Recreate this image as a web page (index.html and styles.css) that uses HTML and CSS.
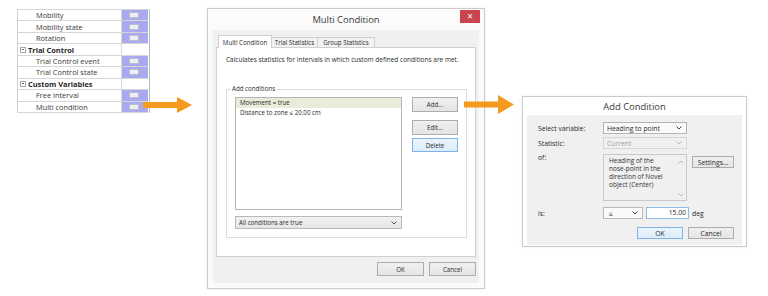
FILE: index.html
```html
<!DOCTYPE html>
<html lang="en">
<head>
  <meta charset="UTF-8">
  <title>Multi Condition</title>
  <meta name="viewport" content="width=device-width, initial-scale=1.0">
  <link rel="stylesheet" href="styles.css">
</head>
<body>
<div id="canvas">

  <!-- variable tree -->
  <div class="tree">
    <div class="row"><div class="name">Mobility</div><div class="cell"><span class="mini"></span></div></div>
    <div class="row"><div class="name">Mobility state</div><div class="cell"><span class="mini"></span></div></div>
    <div class="row"><div class="name">Rotation</div><div class="cell"><span class="mini"></span></div></div>
    <div class="row head"><div class="name"><span class="fold"></span>Trial Control</div><div class="cell"></div></div>
    <div class="row"><div class="name">Trial Control event</div><div class="cell"><span class="mini"></span></div></div>
    <div class="row"><div class="name">Trial Control state</div><div class="cell"><span class="mini"></span></div></div>
    <div class="row head"><div class="name"><span class="fold"></span>Custom Variables</div><div class="cell"></div></div>
    <div class="row"><div class="name">Free interval</div><div class="cell"><span class="mini"></span></div></div>
    <div class="row"><div class="name">Multi condition</div><div class="cell"><span class="mini"></span></div></div>
  </div>

  <svg class="arrow arrow-1" width="50" height="16" viewBox="0 0 50 16">
    <polygon points="0,5 34,5 34,0 49,8 34,16 34,11 0,11" fill="#f39a1f"/>
  </svg>

  <!-- Multi Condition dialog -->
  <div class="win mc">
    <div class="titlebar">
      <span class="title">Multi Condition</span>
      <span class="close">&#215;</span>
    </div>
    <div class="client">
      <div class="tabs">
        <div class="tab active">Multi Condition</div>
        <div class="tab t2">Trial Statistics</div>
        <div class="tab t3">Group Statistics</div>
      </div>
      <div class="tabpanel">
        <div class="desc">Calculates statistics for intervals in which custom defined conditions are met.</div>
        <div class="group">
          <span class="group-label">Add conditions</span>
          <div class="group-body">
            <div class="list-col">
              <div class="listbox">
                <div class="item selected">Movement = true</div>
                <div class="item">Distance to zone &#8804; 20.00 cm</div>
              </div>
              <div class="combo wide">
                <span>All conditions are true</span>
                <svg width="6" height="4" viewBox="0 0 6 4"><polyline points="0.5,0.5 3,3 5.5,0.5" fill="none" stroke="#555" stroke-width="1"/></svg>
              </div>
            </div>
            <div class="btn-col">
              <div class="btn add">Add...</div>
              <div class="btn edit">Edit...</div>
              <div class="btn focus delete">Delete</div>
            </div>
          </div>
        </div>
      </div>
      <div class="footer">
        <div class="btn foot">OK</div>
        <div class="btn foot">Cancel</div>
      </div>
    </div>
  </div>

  <svg class="arrow arrow-2" width="51" height="19" viewBox="0 0 51 19">
    <polygon points="0,6.5 34,6.5 34,0 50,9.5 34,19 34,12.5 0,12.5" fill="#f39a1f"/>
  </svg>

  <!-- Add Condition dialog -->
  <div class="win ac">
    <div class="titlebar small">
      <span class="title">Add Condition</span>
    </div>
    <div class="client ac-client">
      <div class="ac-row">
        <div class="lbl">Select variable:</div>
        <div class="combo sel">
          <span>Heading to point</span>
          <svg width="6" height="4" viewBox="0 0 6 4"><polyline points="0.5,0.5 3,3 5.5,0.5" fill="none" stroke="#444" stroke-width="1"/></svg>
        </div>
      </div>
      <div class="ac-row r2">
        <div class="lbl">Statistic:</div>
        <div class="combo sel disabled">
          <span>Current</span>
          <svg width="6" height="4" viewBox="0 0 6 4"><polyline points="0.5,0.5 3,3 5.5,0.5" fill="none" stroke="#bbb" stroke-width="1"/></svg>
        </div>
      </div>
      <div class="ac-row r3">
        <div class="lbl top">of:</div>
        <div class="memo">
          <div class="memo-text">Heading of the<br>nose-point in the<br>direction of Novel<br>object (Center)</div>
          <div class="memo-bar">
            <svg width="6" height="4" viewBox="0 0 6 4"><polyline points="0.5,3.5 3,1 5.5,3.5" fill="none" stroke="#bbb" stroke-width="1"/></svg>
            <svg width="6" height="4" viewBox="0 0 6 4"><polyline points="0.5,0.5 3,3 5.5,0.5" fill="none" stroke="#bbb" stroke-width="1"/></svg>
          </div>
        </div>
        <div class="btn settings">Settings...</div>
      </div>
      <div class="ac-row r4">
        <div class="lbl">is:</div>
        <div class="combo op">
          <span>&#8804;</span>
          <svg width="6" height="4" viewBox="0 0 6 4"><polyline points="0.5,0.5 3,3 5.5,0.5" fill="none" stroke="#444" stroke-width="1"/></svg>
        </div>
        <div class="num">15.00</div>
        <div class="unit">deg</div>
      </div>
      <div class="ac-row r5">
        <div class="btn focus ac-btn">OK</div>
        <div class="btn ac-btn">Cancel</div>
      </div>
    </div>
  </div>

</div>
</body>
</html>
```

FILE: styles.css
```css
* {
  box-sizing: border-box;
}
body, html {
  margin: 0;
  padding: 0;
  background: #ffffff;
  font-family: 'Open Sans', 'Noto Sans', sans-serif;
  color: #2a2a2a;
}
#canvas {
  position: relative;
  width: 768px;
  height: 296px;
  overflow: hidden;
}

/* tree */
.tree {
  position: absolute;
  left: 17px;
  top: 9px;
  width: 133px;
  border-left: 1px solid #cfcfcf;
  border-top: 1px solid #d6d6d6;
  border-right: 1px solid #b9b9b9;
  padding-right: 1px;
  font-size: 7.4px;
}
.row {
  display: flex;
  height: 11.45px;
  border-bottom: 1px solid #d6d6d6;
}
.name {
  width: 104px;
  padding-left: 18px;
  display: flex;
  align-items: center;
  border-right: 1px solid #d6d6d6;
  white-space: nowrap;
  color: #3a3a3a;
}
.cell {
  flex: 1;
  background: #a9a9f0;
  display: flex;
  align-items: center;
  padding-left: 7px;
}
.head .name {
  padding-left: 2px;
  font-weight: 700;
  color: #262626;
}
.head .cell {
  background: #ffffff;
}
.fold {
  width: 6px;
  height: 6px;
  border: 1px solid #a5a5a5;
  margin-right: 2px;
  position: relative;
}
.fold::after {
  content: "";
  position: absolute;
  left: 1px;
  right: 1px;
  top: 1.5px;
  height: 1px;
  background: #666;
}
.mini {
  width: 10px;
  height: 6px;
  border: 1px solid #bcbccc;
  border-radius: 1px;
  background: #eeeef4;
}

/* arrows */
.arrow {
  position: absolute;
}
.arrow-1 {
  left: 143px;
  top: 97px;
}
.arrow-2 {
  left: 464px;
  top: 95px;
}

/* windows */
.win {
  position: absolute;
  background: #fbfbfb;
  border: 1px solid #cbcbcb;
  display: flex;
  flex-direction: column;
  box-shadow: 0 0 3px rgba(0, 0, 0, 0.08);
}
.mc {
  left: 207px;
  top: 8px;
  width: 278px;
  height: 281px;
}
.ac {
  left: 522px;
  top: 96px;
  width: 225px;
  height: 151px;
  background: #ffffff;
}
.titlebar {
  height: 21px;
  display: flex;
  align-items: center;
  justify-content: center;
  position: relative;
}
.titlebar.small {
  height: 18px;
}
.title {
  font-size: 9.4px;
  color: #3a3a3a;
}
.close {
  position: absolute;
  right: 4px;
  top: 1px;
  width: 20px;
  height: 13px;
  background: #c9444b;
  color: #fff;
  font-size: 10px;
  line-height: 13px;
  text-align: center;
}
.client {
  flex: 1;
  margin: 0 5px 5px;
  background: #f0f0f0;
  padding: 5px 3px 0;
  display: flex;
  flex-direction: column;
  font-size: 6.2px;
}

/* tabs */
.tabs {
  display: flex;
  align-items: flex-end;
  height: 13px;
  margin: 0 0 -1px 2px;
}
.tab {
  height: 11px;
  border: 1px solid #d0d0d0;
  border-left: 0;
  background: #f2f2f2;
  display: flex;
  align-items: center;
  justify-content: center;
  white-space: nowrap;
}
.tab.active {
  width: 54px;
  height: 13px;
  border-left: 1px solid #d0d0d0;
  border-bottom: 0;
  background: #ffffff;
  position: relative;
  z-index: 1;
}
.t2 {
  width: 46px;
}
.t3 {
  width: 57px;
}
.tabpanel {
  height: 210px;
  background: #ffffff;
  border: 1px solid #d0d0d0;
  padding: 8px 0 0 9px;
}
.desc {
  line-height: 8px;
  font-size: 6.5px;
  white-space: nowrap;
}
.group {
  position: relative;
  width: 241px;
  margin-top: 25px;
  border: 1px solid #dcdcdc;
  padding: 7px 8px 8px;
}
.group-label {
  position: absolute;
  left: 4px;
  top: -5px;
  line-height: 8px;
  padding: 0 1px;
  background: #ffffff;
}
.group-body {
  display: flex;
}
.list-col {
  width: 167px;
}
.listbox {
  height: 113px;
  border: 1px solid #b5b5b5;
  background: #fff;
}
.item {
  height: 10px;
  line-height: 10px;
  padding-left: 4px;
  white-space: nowrap;
}
.item.selected {
  background: #e9ecdb;
}
.combo {
  display: flex;
  align-items: center;
  justify-content: space-between;
  border: 1px solid #b9b9b9;
  background: linear-gradient(#f2f2f2, #e6e6e6);
  padding: 0 4px 0 3px;
  white-space: nowrap;
}
.combo.wide {
  height: 13px;
  margin-top: 6px;
}
.btn-col {
  margin-left: 10px;
  width: 46px;
  display: flex;
  flex-direction: column;
}
.btn {
  display: flex;
  align-items: center;
  justify-content: center;
  border: 1px solid #adadad;
  background: linear-gradient(#f0f0f0, #e4e4e4);
  white-space: nowrap;
}
.btn.focus {
  border-color: #7eb4ea;
  background: linear-gradient(#ecf4fc, #dcecfc);
}
.add {
  height: 15px;
}
.edit {
  height: 15px;
  margin-top: 8px;
}
.delete {
  height: 14px;
  margin-top: 3px;
}
.footer {
  display: flex;
  justify-content: flex-end;
  gap: 5px;
  margin-top: 5px;
}
.foot {
  width: 47px;
  height: 14px;
}

/* add condition */
.ac-client {
  margin: 0 4px 1px;
  padding: 7px 8px 0 11px;
  font-size: 6.8px;
}
.ac-row {
  display: flex;
  align-items: center;
}
.r2 {
  margin-top: 3px;
}
.r3 {
  margin-top: 5px;
  align-items: flex-start;
}
.r4 {
  margin-top: 6px;
}
.r5 {
  margin-top: 8px;
  justify-content: flex-end;
  gap: 5px;
}
.lbl {
  width: 65px;
  white-space: nowrap;
}
.lbl.top {
  line-height: 8px;
}
.combo.sel {
  width: 84px;
  height: 12px;
  background: #fafafa;
  border-color: #b3b3b3;
}
.combo.disabled {
  color: #a0a0a0;
  background: #f0f0f0;
  border-color: #d6d6d6;
}
.memo {
  width: 84px;
  height: 47px;
  border: 1px solid #c8c8c8;
  display: flex;
  padding: 2px 0 0 5px;
}
.memo-text {
  flex: 1;
  font-size: 6.5px;
  line-height: 8px;
  white-space: nowrap;
  color: #333;
}
.memo-bar {
  width: 11px;
  display: flex;
  flex-direction: column;
  justify-content: space-between;
  align-items: center;
  padding: 3px 0 3px;
}
.settings {
  width: 42px;
  height: 12px;
  margin: 2px 0 0 5px;
}
.combo.op {
  width: 40px;
  height: 12px;
  padding-left: 5px;
  background: #fafafa;
}
.num {
  width: 43px;
  height: 12px;
  margin-left: 3px;
  border: 1px solid #8fbbe8;
  background: #fff;
  text-align: right;
  padding-right: 2px;
  line-height: 10px;
}
.unit {
  margin-left: 3px;
}
.ac-btn {
  width: 46px;
  height: 12px;
}
```
